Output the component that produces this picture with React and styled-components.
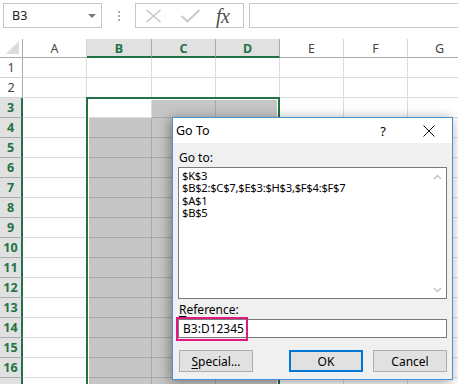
import React from 'react';
import styled, { createGlobalStyle } from 'styled-components';

const Global = createGlobalStyle`
  html, body { margin: 0; padding: 0; background: #fff; }
  body { font-family: "Noto Sans", "Open Sans", sans-serif; }
`;

const GREEN = '#217346';

const Page = styled.div`
  position: relative;
  width: 458px;
  height: 384px;
  overflow: hidden;
  background: #fff;
`;

const Toolbar = styled.div`
  display: flex;
  align-items: flex-start;
  height: 39px;
  padding: 3px 0 0 3px;
  box-sizing: border-box;
`;

const NameBox = styled.div`
  width: 99px;
  height: 25px;
  box-sizing: border-box;
  border: 1px solid #c6c6c6;
  display: flex;
  align-items: center;
  justify-content: space-between;
  padding: 0 4px 0 8px;
  font-size: 12.5px;
  color: #222;
`;

const DropArrow = styled.span`
  width: 0;
  height: 0;
  border-left: 4px solid transparent;
  border-right: 4px solid transparent;
  border-top: 4px solid #7a7a7a;
  margin-right: 1px;
`;

const Dots = styled.div`
  width: 33px;
  height: 25px;
  display: flex;
  flex-direction: column;
  align-items: center;
  justify-content: center;
  gap: 2px;
  & > span {
    width: 2px;
    height: 2px;
    background: #b0b0b0;
  }
`;

const FxBox = styled.div`
  width: 109px;
  height: 25px;
  box-sizing: border-box;
  border: 1px solid #c6c6c6;
  display: flex;
  align-items: center;
  padding-left: 9px;
`;

const FxIcon = styled.span`
  font-family: "Liberation Serif", serif;
  font-style: italic;
  font-size: 20px;
  line-height: 20px;
  color: #505050;
  margin-left: 15px;
  letter-spacing: -0.5px;
`;

const FormulaInput = styled.div`
  flex: 1;
  height: 25px;
  box-sizing: border-box;
  border: 1px solid #c6c6c6;
  border-right: none;
  margin-left: 5px;
`;

const Sheet = styled.div`
  position: relative;
  display: grid;
  grid-template-columns: 23px 64px 65px 64px 64px 64px 64px 64px;
  grid-template-rows: 19px repeat(17, 20px);
`;

const Corner = styled.div`
  position: relative;
  box-sizing: border-box;
  border-right: 1px solid #ababab;
  border-bottom: 1px solid #ababab;
  &::after {
    content: '';
    position: absolute;
    right: 3px;
    bottom: 3px;
    width: 0;
    height: 0;
    border-left: 13px solid transparent;
    border-bottom: 13px solid #dcdcdc;
  }
`;

const ColHead = styled.div`
  box-sizing: border-box;
  display: flex;
  align-items: center;
  justify-content: center;
  font-size: 12.5px;
  border-right: 1px solid ${p => (p.$sel ? '#ababab' : '#d4d4d4')};
  border-bottom: ${p => (p.$sel ? `2px solid ${GREEN}` : '1px solid #ababab')};
  background: ${p => (p.$sel ? '#e1e1e1' : '#fff')};
  color: ${p => (p.$sel ? GREEN : '#444')};
  font-weight: ${p => (p.$sel ? 700 : 400)};
  padding-top: ${p => (p.$sel ? '1px' : '0')};
`;

const RowHead = styled.div`
  box-sizing: border-box;
  display: flex;
  align-items: center;
  justify-content: center;
  font-size: 12.5px;
  border-right: ${p => (p.$sel ? `2px solid ${GREEN}` : '1px solid #ababab')};
  border-bottom: 1px solid ${p => (p.$sel ? '#ababab' : '#d4d4d4')};
  background: ${p => (p.$sel ? '#e1e1e1' : '#fff')};
  color: ${p => (p.$sel ? GREEN : '#444')};
  font-weight: ${p => (p.$sel ? 700 : 400)};
`;

const Cell = styled.div`
  box-sizing: border-box;
  border-right: 1px solid ${p => (p.$sel ? '#a8a8a8' : '#dadcdd')};
  border-bottom: 1px solid ${p => (p.$sel ? '#a8a8a8' : '#dadcdd')};
  background: ${p => (p.$sel ? '#c6c6c6' : '#fff')};
`;

const SelectionBox = styled.div`
  position: absolute;
  left: 86px;
  top: 58px;
  width: 194px;
  height: 400px;
  box-sizing: border-box;
  border: 2px solid ${GREEN};
  box-shadow: inset 0 0 0 1px #fff;
  pointer-events: none;
`;

const Dialog = styled.div`
  position: absolute;
  left: 172px;
  top: 117px;
  width: 281px;
  height: 263px;
  box-sizing: border-box;
  border: 1px solid #4a8fd0;
  background: #f0f0f0;
  box-shadow: -2px 2px 12px rgba(0, 0, 0, 0.4);
  display: flex;
  flex-direction: column;
  font-size: 12px;
  color: #000;
`;

const TitleBar = styled.div`
  height: 25px;
  background: #fff;
  display: flex;
  align-items: center;
  padding-left: 3px;
`;

const Title = styled.span`
  flex: 1;
  font-size: 12.5px;
`;

const TitleButton = styled.span`
  width: 46px;
  display: flex;
  align-items: center;
  justify-content: center;
  font-size: 13px;
`;

const Body = styled.div`
  flex: 1;
  padding: 6px 5px 0 5px;
  display: flex;
  flex-direction: column;
`;

const Label = styled.div`
  height: ${p => p.$h || 17}px;
  line-height: ${p => p.$h || 17}px;
  padding-left: 1px;
  margin-top: ${p => p.$mt || 0}px;
  & u { text-decoration: underline; text-underline-offset: 2px; }
`;

const ListBox = styled.div`
  margin-top: 1px;
  height: 132px;
  box-sizing: border-box;
  border: 1px solid #7a7a7a;
  background: #fff;
  display: flex;
`;

const ListItems = styled.div`
  flex: 1;
  padding: 2px 0 0 3px;
  line-height: 12.4px;
  font-size: 11.2px;
  letter-spacing: -0.25px;
`;

const ScrollBar = styled.div`
  width: 17px;
  display: flex;
  flex-direction: column;
  justify-content: space-between;
  align-items: center;
  padding: 6px 0 5px;
`;

const RefRow = styled.div`
  position: relative;
  margin-top: 1px;
`;

const RefInput = styled.div`
  height: 19px;
  box-sizing: border-box;
  border: 1px solid #7a7a7a;
  background: #fff;
  padding-left: 4px;
  line-height: 17px;
`;

const Highlight = styled.div`
  position: absolute;
  left: -2px;
  top: -2px;
  width: 72px;
  height: 24px;
  box-sizing: border-box;
  border: 2px solid #e2197f;
  pointer-events: none;
`;

const ButtonRow = styled.div`
  display: flex;
  margin-top: 12px;
  padding-left: 1px;
`;

const Button = styled.div`
  width: 74px;
  height: 22px;
  box-sizing: border-box;
  border: ${p => (p.$primary ? '2px solid #0078d7' : '1px solid #adadad')};
  background: #e1e1e1;
  display: flex;
  align-items: center;
  justify-content: center;
  margin-left: ${p => p.$ml || 0}px;
  & u { text-decoration: underline; text-underline-offset: 2px; }
`;

const cols = ['A', 'B', 'C', 'D', 'E', 'F', 'G'];
const selCols = new Set(['B', 'C', 'D']);

const Chevron = ({ up }) => (
  <svg width="9" height="6" viewBox="0 0 9 6">
    <path
      d={up ? 'M1 5 L4.5 1.5 L8 5' : 'M1 1 L4.5 4.5 L8 1'}
      fill="none"
      stroke="#c2c2c2"
      strokeWidth="1.4"
    />
  </svg>
);

export default function App() {
  const rows = Array.from({ length: 17 }, (_, i) => i + 1);
  return (
    <Page>
      <Global />
      <Toolbar>
        <NameBox>
          B3
          <DropArrow />
        </NameBox>
        <Dots>
          <span />
          <span />
          <span />
        </Dots>
        <FxBox>
          <svg width="17" height="14" viewBox="0 0 17 14">
            <path d="M1.5 1 L15.5 13 M15.5 1 L1.5 13" stroke="#c8c8c8" strokeWidth="1.6" fill="none" />
          </svg>
          <svg width="21" height="14" viewBox="0 0 21 14" style={{ marginLeft: 18 }}>
            <path d="M1.5 7 L7.5 12.5 L19.5 1" stroke="#c8c8c8" strokeWidth="2" fill="none" />
          </svg>
          <FxIcon>fx</FxIcon>
        </FxBox>
        <FormulaInput />
      </Toolbar>
      <Sheet>
        <Corner />
        {cols.map(c => (
          <ColHead key={c} $sel={selCols.has(c)}>
            {c}
          </ColHead>
        ))}
        {rows.map(r => (
          <React.Fragment key={r}>
            <RowHead $sel={r >= 3}>{r < 17 ? r : ''}</RowHead>
            {cols.map(c => (
              <Cell key={c} $sel={r >= 3 && selCols.has(c) && !(r === 3 && c === 'B')} />
            ))}
          </React.Fragment>
        ))}
        <SelectionBox />
      </Sheet>
      <Dialog>
        <TitleBar>
          <Title>Go To</Title>
          <TitleButton>?</TitleButton>
          <TitleButton>
            <svg width="12" height="12" viewBox="0 0 12 12">
              <path d="M0.5 0.5 L11.5 11.5 M11.5 0.5 L0.5 11.5" stroke="#111" strokeWidth="1" fill="none" />
            </svg>
          </TitleButton>
        </TitleBar>
        <Body>
          <Label>Go to:</Label>
          <ListBox>
            <ListItems>
              <div>$K$3</div>
              <div>$B$2:$C$7,$E$3:$H$3,$F$4:$F$7</div>
              <div>$A$1</div>
              <div>$B$5</div>
            </ListItems>
            <ScrollBar>
              <Chevron up />
              <Chevron />
            </ScrollBar>
          </ListBox>
          <Label $h={16} $mt={3}>
            <u>R</u>eference:
          </Label>
          <RefRow>
            <RefInput>B3:D12345</RefInput>
            <Highlight />
          </RefRow>
          <ButtonRow>
            <Button>
              <span>
                <u>S</u>pecial...
              </span>
            </Button>
            <Button $primary $ml={36}>OK</Button>
            <Button $ml={10}>Cancel</Button>
          </ButtonRow>
        </Body>
      </Dialog>
    </Page>
  );
}
